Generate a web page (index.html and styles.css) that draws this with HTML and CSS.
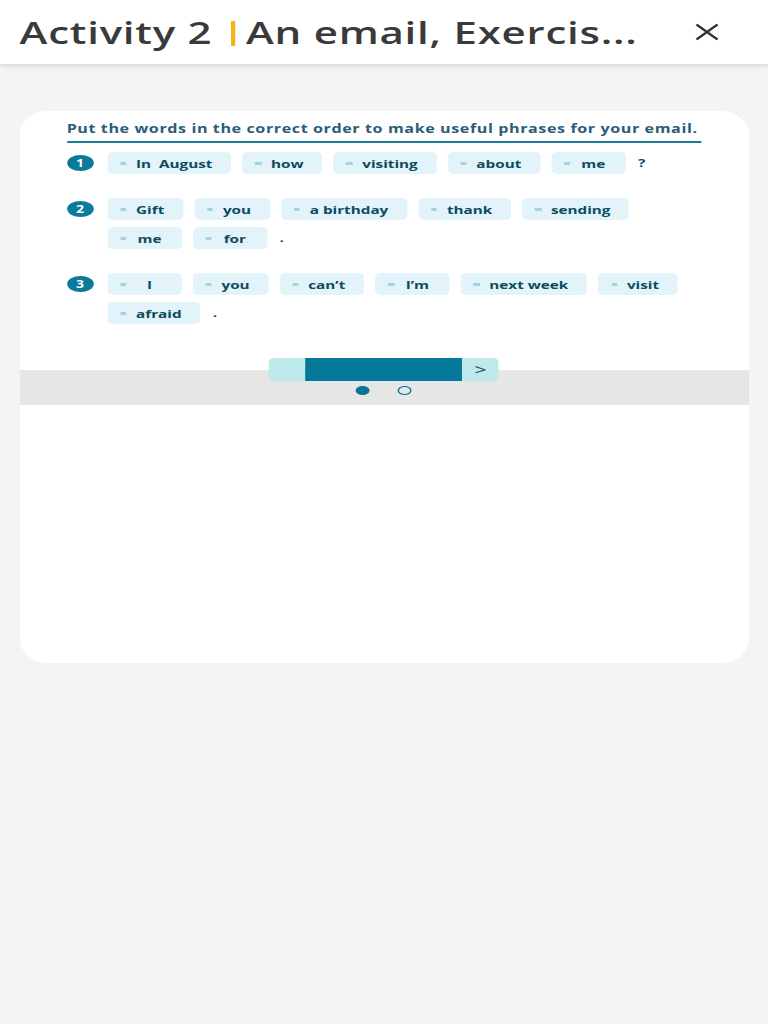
FILE: index.html
```html
<!DOCTYPE html>
<html lang="en">
<head>
  <meta charset="UTF-8">
  <meta name="viewport" content="width=device-width, initial-scale=1">
  <title>Activity 2 - An email</title>
  <link rel="stylesheet" href="styles.css">
</head>
<body>
<div class="stage">

  <!-- ===== Top bar ===== -->
  <header class="topbar">
    <h1 class="title">
      <span class="title-num">Activity 2</span><span class="title-sep"></span><span class="title-name">An email, Exercis...</span>
    </h1>
    <button class="close" aria-label="Close">
      <svg viewBox="0 0 18 20" width="18" height="20"><path d="M1.5 2.5 L16.5 17.5 M16.5 2.5 L1.5 17.5" stroke="#333" stroke-width="2" fill="none"/></svg>
    </button>
  </header>

  <!-- ===== Exercise card ===== -->
  <main class="card">
    <p class="instruction">Put the words in the correct order to make useful phrases for your email.</p>

    <div class="item">
      <span class="num">1</span>
      <div class="chips">
        <span class="chip"><i></i><b>In&nbsp; August</b></span>
        <span class="chip"><i></i><b>how</b></span>
        <span class="chip"><i></i><b>visiting</b></span>
        <span class="chip"><i></i><b>about</b></span>
        <span class="chip"><i></i><b>me</b></span>
        <span class="end">?</span>
      </div>
    </div>

    <div class="item">
      <span class="num">2</span>
      <div class="chips">
        <span class="chip"><i></i><b>Gift</b></span>
        <span class="chip"><i></i><b>you</b></span>
        <span class="chip"><i></i><b>a birthday</b></span>
        <span class="chip"><i></i><b>thank</b></span>
        <span class="chip"><i></i><b>sending</b></span>
        <span class="chip"><i></i><b>me</b></span>
        <span class="chip"><i></i><b>for</b></span>
        <span class="end">.</span>
      </div>
    </div>

    <div class="item">
      <span class="num">3</span>
      <div class="chips">
        <span class="chip"><i></i><b>I</b></span>
        <span class="chip"><i></i><b>you</b></span>
        <span class="chip"><i></i><b>can’t</b></span>
        <span class="chip"><i></i><b>I’m</b></span>
        <span class="chip"><i></i><b>next week</b></span>
        <span class="chip"><i></i><b>visit</b></span>
        <span class="chip"><i></i><b>afraid</b></span>
        <span class="end">.</span>
      </div>
    </div>

    <!-- ===== Pager ===== -->
    <div class="pager">
      <div class="pager-btns">
        <span class="pg-prev"></span>
        <span class="pg-check"></span>
        <span class="pg-next">&gt;</span>
      </div>
    </div>
    <div class="dots">
      <span class="dot on"></span>
      <span class="dot"></span>
    </div>
  </main>

</div>
</body>
</html>
```

FILE: styles.css
```css
/* ===== Base ===== */
html, body {
  margin: 0;
  background: #f4f4f4;
  overflow: hidden;
}
body {
  font-family: 'Open Sans', 'Noto Sans', sans-serif;
  color: #333;
}

/* the app is drawn stretched sideways */
.stage {
  width: 548.57px;
  transform: scaleX(1.4);
  transform-origin: 0 0;
}

/* ===== Top bar ===== */
.topbar {
  height: 64px;
  background: #fff;
  box-shadow: 0 2px 4px rgba(0,0,0,0.12);
  display: flex;
  align-items: center;
  padding-left: 14px;
}
.title {
  flex: 1;
  min-width: 0;
  margin: 0;
  font-size: 30px;
  font-weight: 600;
  letter-spacing: 0.55px;
  color: #3a3a3a;
  display: flex;
  align-items: center;
  white-space: nowrap;
}
.title-sep {
  flex: none;
  width: 3px;
  height: 25px;
  background: #f6b414;
  margin: 2px 8px 0 13px;
}
.close {
  flex: none;
  background: none;
  border: 0;
  padding: 0;
  margin: 0 35px 0 20px;
  width: 18px;
  height: 20px;
}
.close svg {
  display: block;
}

/* ===== Card ===== */
.card {
  margin: 47px 13.6px 0;
  background: #fff;
  border-radius: 19px / 25px;
  padding: 10px 34px 258px;
}
.instruction {
  margin: 0;
  font-size: 11.5px;
  line-height: 16px;
  font-weight: 700;
  letter-spacing: 0.42px;
  color: #2b5c78;
  padding-bottom: 4px;
  border-bottom: 2px solid #187c9d;
  white-space: nowrap;
}

.item {
  display: flex;
  align-items: flex-start;
  margin-top: 24px;
}
.item:first-of-type {
  margin-top: 9px;
}
.num {
  flex: none;
  width: 19px;
  height: 16px;
  margin: 3px 10px 0 0;
  border-radius: 50%;
  background: #0b7a9b;
  color: #fff;
  font-size: 10px;
  font-weight: 700;
  line-height: 16px;
  text-align: center;
}
.chips {
  flex: 1;
  display: flex;
  flex-wrap: wrap;
  column-gap: 8px;
  row-gap: 7px;
}
.chip {
  display: flex;
  align-items: center;
  height: 22px;
  min-width: 53px;
  box-sizing: border-box;
  padding: 0 13.3px 0 9.3px;
  background: #e2f3f9;
  border-radius: 4px;
  font-size: 10.9px;
  color: #0c4b60;
}
.chip i {
  flex: none;
  width: 4.3px;
  height: 3px;
  background: #a3d2e1;
  margin-right: 7px;
}
.chip b {
  flex: 1;
  text-align: center;
  font-weight: 700;
  white-space: nowrap;
}
.end {
  line-height: 22px;
  font-size: 11px;
  font-weight: 700;
  color: #0c4b60;
  padding-left: 1px;
}

/* ===== Pager ===== */
.pager {
  margin-top: 34px;
  display: flex;
  justify-content: center;
  position: relative;
  z-index: 1;
}
.pager-btns {
  display: flex;
  height: 23px;
}
.pg-prev, .pg-next {
  width: 26px;
  background: #bee9ea;
}
.pg-prev {
  border-radius: 4px 0 0 4px;
}
.pg-next {
  border-radius: 0 4px 4px 0;
  color: #1b4a5e;
  font-size: 15px;
  line-height: 22px;
  text-align: center;
}
.pg-check {
  width: 112px;
  background: #06789a;
}
.dots {
  margin: -11px -34px 0;
  background: #e6e6e6;
  padding: 16px 0 10px;
  display: flex;
  justify-content: center;
  gap: 20px;
}
.dot {
  width: 10px;
  height: 9px;
  box-sizing: border-box;
  border-radius: 50%;
  border: 1.5px solid #0a7398;
}
.dot.on {
  background: #0a7398;
}
```
